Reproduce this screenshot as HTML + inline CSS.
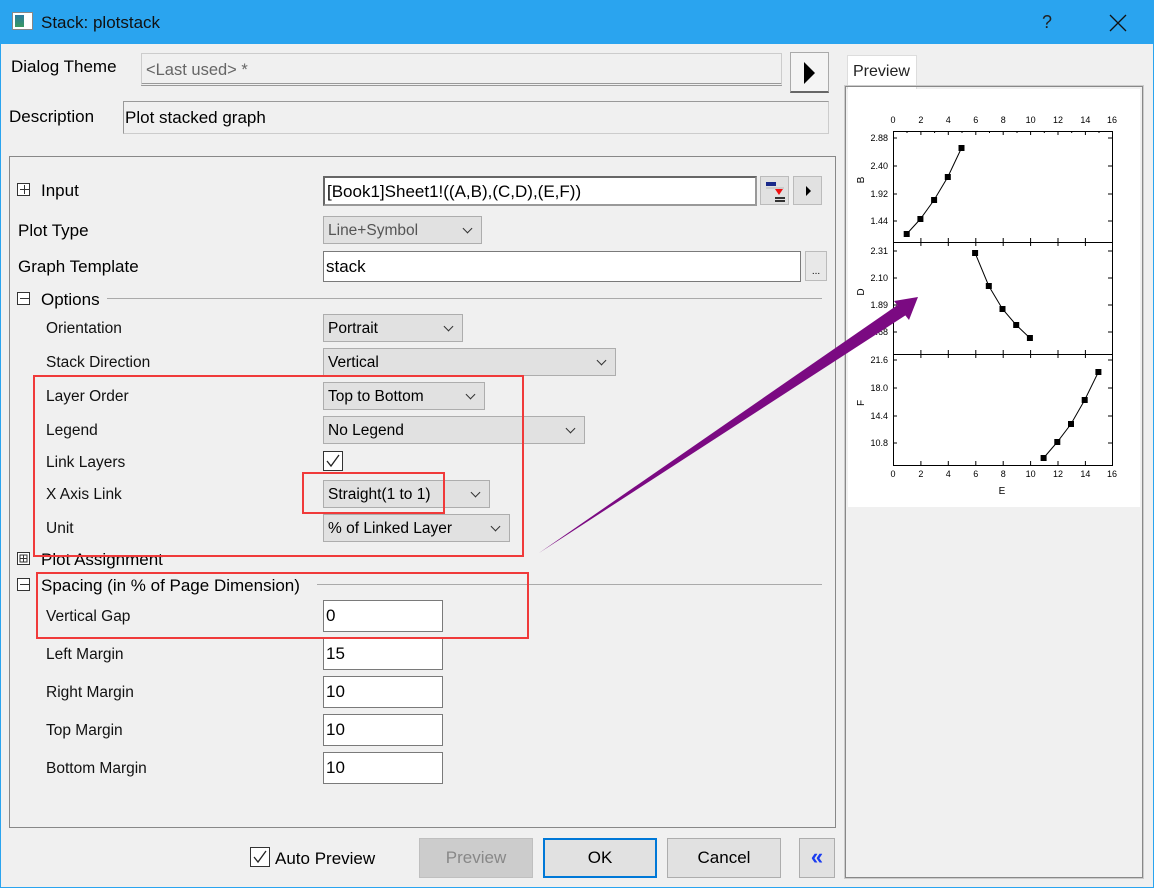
<!DOCTYPE html>
<html><head><meta charset="utf-8"><style>
*{box-sizing:border-box;margin:0;padding:0}
body{width:1154px;height:888px;background:#f0f0f0;font-family:"Liberation Sans",sans-serif;font-size:16px;color:#000;position:relative;overflow:hidden}
.a{position:absolute}
.t{position:absolute;white-space:nowrap;line-height:20px}
.cb{position:absolute;background:#e1e1e1;border:1px solid #adadad;color:#000;font-size:15.5px;padding-left:4px;line-height:27px}
.cb:after{content:"";position:absolute;right:10px;top:8px;width:6px;height:6px;border-right:1.3px solid #333;border-bottom:1.3px solid #333;transform:rotate(45deg)}
.ed{position:absolute;background:#fff;border:1px solid #7a7a7a;font-size:17px;padding-left:2px;line-height:30px}
.lbl{position:absolute;white-space:nowrap;font-size:15.5px;color:#111}
.box{position:absolute;width:13px;height:13px;border:1px solid #333;background:#fff}
.red{position:absolute;border:2.5px solid #f03a3a}
.btn{position:absolute;border:1px solid #adadad;background:#e1e1e1;text-align:center;font-size:17px;line-height:38px}
</style></head><body>
<div class="a" style="left:0;top:0;width:1154px;height:44px;background:#2aa4ef"></div>
<div class="a" style="left:0;top:0;width:1px;height:888px;background:#2aa4ef"></div>
<div class="a" style="left:1153px;top:0;width:1px;height:888px;background:#2aa4ef"></div>
<div class="a" style="left:0;top:887px;width:1154px;height:1px;background:#2aa4ef"></div>
<div class="a" style="left:12px;top:12px;width:21px;height:18px;background:#fff;border:1px solid #888"><div class="a" style="left:2px;top:2px;width:9px;height:12px;background:linear-gradient(#2a7aa0,#3a9a60)"></div></div>
<div class="t" style="left:41px;top:13px;font-size:17px;color:#111">Stack: plotstack</div>
<div class="t" style="left:1042px;top:12px;font-size:18px;color:#222">?</div>
<svg class="a" style="left:1109px;top:14px" width="18" height="18"><path d="M1 1L17 17M17 1L1 17" stroke="#111" stroke-width="1.3"/></svg>

<div class="t" style="left:11px;top:57px;font-size:17px">Dialog Theme</div>
<div class="a" style="left:141px;top:53px;width:641px;height:33px;border:1px solid #ccc;border-bottom:3px double #999;background:#f0f0f0"></div>
<div class="t" style="left:146px;top:60px;font-size:16.5px;color:#666">&lt;Last used&gt; *</div>
<div class="a" style="left:790px;top:52px;width:39px;height:41px;border:1px solid #aaa;border-bottom:2px solid #666;background:#f4f4f4"><div class="a" style="left:13px;top:9px;width:0;height:0;border-left:11px solid #000;border-top:11px solid transparent;border-bottom:11px solid transparent"></div></div>
<div class="t" style="left:9px;top:107px;font-size:17px">Description</div>
<div class="a" style="left:123px;top:101px;width:706px;height:33px;border:1px solid #ccc;border-left-color:#999;border-top-color:#999"></div>
<div class="t" style="left:125px;top:108px;font-size:17px">Plot stacked graph</div>

<div class="a" style="left:9px;top:156px;width:827px;height:672px;border:1px solid #888"></div>

<div class="box" style="left:17px;top:183px"></div><div class="a" style="left:20px;top:189px;width:9px;height:1px;background:#333"></div><div class="a" style="left:24px;top:185px;width:1px;height:9px;background:#333"></div>
<div class="t" style="left:41px;top:181px;font-size:17px">Input</div>
<div class="ed" style="left:323px;top:176px;width:434px;height:30px;border:2px solid #999;border-top-color:#666;border-left-color:#666;line-height:27px">[Book1]Sheet1!((A,B),(C,D),(E,F))</div>
<div class="a" style="left:760px;top:176px;width:29px;height:29px;border:1px solid #bbb;background:#e1e1e1">
<div class="a" style="left:5px;top:5px;width:10px;height:4px;background:#1a2a8a"></div><div class="a" style="left:5px;top:10px;width:18px;height:2px;background:#ccc"></div>
<div class="a" style="left:14px;top:12px;width:0;height:0;border-left:4px solid transparent;border-right:4px solid transparent;border-top:6px solid #f01010"></div>
<div class="a" style="left:14px;top:20px;width:10px;height:2px;background:#333"></div><div class="a" style="left:14px;top:23px;width:10px;height:2px;background:#333"></div></div>
<div class="a" style="left:793px;top:176px;width:29px;height:29px;border:1px solid #bbb;background:#e1e1e1"><div class="a" style="left:12px;top:9px;border-left:5px solid #000;border-top:5px solid transparent;border-bottom:5px solid transparent"></div></div>

<div class="t" style="left:18px;top:221px;font-size:17px">Plot Type</div>
<div class="cb" style="left:323px;top:216px;width:159px;height:28px;color:#555">Line+Symbol</div>
<div class="t" style="left:18px;top:257px;font-size:17px">Graph Template</div>
<div class="ed" style="left:323px;top:251px;width:478px;height:31px">stack</div>
<div class="a" style="left:805px;top:251px;width:22px;height:30px;border:1px solid #bbb;background:#e8e8e8;font-size:10px;text-align:center;line-height:40px">...</div>

<div class="box" style="left:17px;top:292px"></div><div class="a" style="left:20px;top:298px;width:9px;height:1px;background:#333"></div>
<div class="t" style="left:41px;top:290px;font-size:17px">Options</div>
<div class="a" style="left:107px;top:298px;width:715px;height:1px;background:#aaa"></div>

<div class="lbl" style="left:46px;top:320px">Orientation</div>
<div class="cb" style="left:323px;top:314px;width:140px;height:28px">Portrait</div>
<div class="lbl" style="left:46px;top:354px">Stack Direction</div>
<div class="cb" style="left:323px;top:348px;width:293px;height:28px">Vertical</div>
<div class="lbl" style="left:46px;top:388px">Layer Order</div>
<div class="cb" style="left:323px;top:382px;width:162px;height:28px">Top to Bottom</div>
<div class="lbl" style="left:46px;top:422px">Legend</div>
<div class="cb" style="left:323px;top:416px;width:262px;height:28px">No Legend</div>
<div class="lbl" style="left:46px;top:454px">Link Layers</div>
<div class="a" style="left:323px;top:451px;width:20px;height:20px;border:1px solid #333;background:#fff"></div>
<svg class="a" style="left:323px;top:451px" width="20" height="20"><path d="M4 10L8 15L16 4" fill="none" stroke="#222" stroke-width="1.3"/></svg>
<div class="lbl" style="left:46px;top:486px">X Axis Link</div>
<div class="cb" style="left:323px;top:480px;width:167px;height:28px">Straight(1 to 1)</div>
<div class="lbl" style="left:46px;top:520px">Unit</div>
<div class="cb" style="left:323px;top:514px;width:187px;height:28px">% of Linked Layer</div>

<div class="box" style="left:17px;top:552px"></div>
<svg class="a" style="left:17px;top:552px" width="13" height="13"><path d="M3 3H10V10H3ZM6.5 3V10M3 6.5H10" fill="none" stroke="#333" stroke-width="1"/></svg>
<div class="t" style="left:41px;top:550px;font-size:17px">Plot Assignment</div>

<div class="box" style="left:17px;top:578px"></div><div class="a" style="left:20px;top:584px;width:9px;height:1px;background:#333"></div>
<div class="t" style="left:41px;top:576px;font-size:17px">Spacing (in % of Page Dimension)</div>
<div class="a" style="left:317px;top:584px;width:505px;height:1px;background:#aaa"></div>

<div class="lbl" style="left:46px;top:608px">Vertical Gap</div>
<div class="ed" style="left:323px;top:600px;width:120px;height:32px">0</div>
<div class="lbl" style="left:46px;top:646px">Left Margin</div>
<div class="ed" style="left:323px;top:638px;width:120px;height:32px">15</div>
<div class="lbl" style="left:46px;top:684px">Right Margin</div>
<div class="ed" style="left:323px;top:676px;width:120px;height:32px">10</div>
<div class="lbl" style="left:46px;top:722px">Top Margin</div>
<div class="ed" style="left:323px;top:714px;width:120px;height:32px">10</div>
<div class="lbl" style="left:46px;top:760px">Bottom Margin</div>
<div class="ed" style="left:323px;top:752px;width:120px;height:32px">10</div>

<div class="red" style="left:33px;top:375px;width:491px;height:182px"></div>
<div class="red" style="left:302px;top:472px;width:143px;height:42px"></div>
<div class="red" style="left:36px;top:572px;width:493px;height:67px"></div>

<div class="a" style="left:250px;top:847px;width:20px;height:20px;border:1px solid #333;background:#fff"></div>
<svg class="a" style="left:250px;top:847px" width="20" height="20"><path d="M4 10L8 15L16 4" fill="none" stroke="#222" stroke-width="1.3"/></svg>
<div class="t" style="left:275px;top:849px;font-size:17px">Auto Preview</div>
<div class="btn" style="left:419px;top:838px;width:114px;height:40px;background:#cccccc;border-color:#bfbfbf;color:#888">Preview</div>
<div class="btn" style="left:543px;top:838px;width:114px;height:40px;border:2px solid #0078d7;line-height:36px">OK</div>
<div class="btn" style="left:667px;top:838px;width:114px;height:40px">Cancel</div>
<div class="btn" style="left:799px;top:838px;width:36px;height:40px;color:#1a3cf0;font-size:22px;font-weight:bold;line-height:36px">«</div>

<div class="a" style="left:847px;top:55px;width:70px;height:34px;border:1px solid #ddd;border-bottom:none;background:#fff"></div>
<div class="t" style="left:853px;top:62px;font-size:16px;color:#222">Preview</div>
<div class="a" style="left:845px;top:86px;width:298px;height:792px;border:1px solid #888;outline:1px solid #ccc"></div>
<div class="a" style="left:848px;top:89px;width:292px;height:418px;background:#fff"></div>

<svg class="a" style="left:0;top:0" width="1154" height="888" font-family="Liberation Sans, sans-serif" font-size="9">
<g stroke="#000" stroke-width="1" fill="none">
<rect x="893.5" y="131.5" width="219" height="334"/>
<line x1="893" y1="242.5" x2="1112" y2="242.5"/>
<line x1="893" y1="354.5" x2="1112" y2="354.5"/>
<path d="M920.9 131v4M948.3 131v4M975.8 131v4M1003.2 131v4M1030.6 131v4M1058 131v4M1085.4 131v4M907 131v2M934.6 131v2M962 131v2M989.5 131v2M1017 131v2M1044.3 131v2M1071.7 131v2M1099 131v2"/>
<path d="M920.9 465v-4M948.3 465v-4M975.8 465v-4M1003.2 465v-4M1030.6 465v-4M1058 465v-4M1085.4 465v-4"/>
<path d="M920.9 354v4M948.3 354v4M975.8 354v4M1003.2 354v4M1030.6 354v4M1058 354v4M1085.4 354v4M920.9 354v-4M948.3 354v-4M975.8 354v-4M1003.2 354v-4M1030.6 354v-4M1058 354v-4M1085.4 354v-4"/>
<path d="M920.9 242v4M948.3 242v4M975.8 242v4M1003.2 242v4M1030.6 242v4M1058 242v4M1085.4 242v4M920.9 242v-4M948.3 242v-4M975.8 242v-4M1003.2 242v-4M1030.6 242v-4M1058 242v-4M1085.4 242v-4"/>
<path d="M893 138h4M893 166h4M893 194h4M893 221h4M893 251h4M893 278h4M893 305h4M893 332h4M893 360h4M893 388h4M893 416h4M893 443h4"/>
<path d="M1112 138h-4M1112 166h-4M1112 194h-4M1112 221h-4M1112 251h-4M1112 278h-4M1112 305h-4M1112 332h-4M1112 360h-4M1112 388h-4M1112 416h-4M1112 443h-4"/>
<polyline points="906.7,234 920.4,219 934.1,200 947.8,177 961.5,148"/>
<polyline points="975.1,253 988.8,286 1002.5,309 1016.2,325 1029.9,338"/>
<polyline points="1043.6,458 1057.3,442 1071,424 1084.7,400 1098.4,372"/>
</g>
<g fill="#000">
<rect x="903.7" y="231" width="6" height="6"/><rect x="917.4" y="216" width="6" height="6"/><rect x="931.1" y="197" width="6" height="6"/><rect x="944.8" y="174" width="6" height="6"/><rect x="958.5" y="145" width="6" height="6"/>
<rect x="972.1" y="250" width="6" height="6"/><rect x="985.8" y="283" width="6" height="6"/><rect x="999.5" y="306" width="6" height="6"/><rect x="1013.2" y="322" width="6" height="6"/><rect x="1026.9" y="335" width="6" height="6"/>
<rect x="1040.6" y="455" width="6" height="6"/><rect x="1054.3" y="439" width="6" height="6"/><rect x="1068" y="421" width="6" height="6"/><rect x="1081.7" y="397" width="6" height="6"/><rect x="1095.4" y="369" width="6" height="6"/>
</g>
<g text-anchor="middle">
<text x="893" y="123">0</text><text x="920.9" y="123">2</text><text x="948.3" y="123">4</text><text x="975.8" y="123">6</text><text x="1003.2" y="123">8</text><text x="1030.6" y="123">10</text><text x="1058" y="123">12</text><text x="1085.4" y="123">14</text><text x="1112" y="123">16</text>
<text x="893" y="477">0</text><text x="920.9" y="477">2</text><text x="948.3" y="477">4</text><text x="975.8" y="477">6</text><text x="1003.2" y="477">8</text><text x="1030.6" y="477">10</text><text x="1058" y="477">12</text><text x="1085.4" y="477">14</text><text x="1112" y="477">16</text>
<text x="1002" y="494" font-size="10">E</text>
</g>
<g text-anchor="end">
<text x="888" y="141">2.88</text><text x="888" y="169">2.40</text><text x="888" y="197">1.92</text><text x="888" y="224">1.44</text>
<text x="888" y="254">2.31</text><text x="888" y="281">2.10</text><text x="888" y="308">1.89</text><text x="888" y="335">1.68</text>
<text x="888" y="363">21.6</text><text x="888" y="391">18.0</text><text x="888" y="419">14.4</text><text x="888" y="446">10.8</text>
</g>
<text transform="translate(864,180) rotate(-90)" text-anchor="middle" font-size="10">B</text>
<text transform="translate(864,292) rotate(-90)" text-anchor="middle" font-size="10">D</text>
<text transform="translate(864,403) rotate(-90)" text-anchor="middle" font-size="10">F</text>
<polygon points="539,553 899,304 906,315" fill="#7b0a82"/>
<polygon points="918,297 894,301 909,320" fill="#7b0a82"/>
</svg>
</body></html>
